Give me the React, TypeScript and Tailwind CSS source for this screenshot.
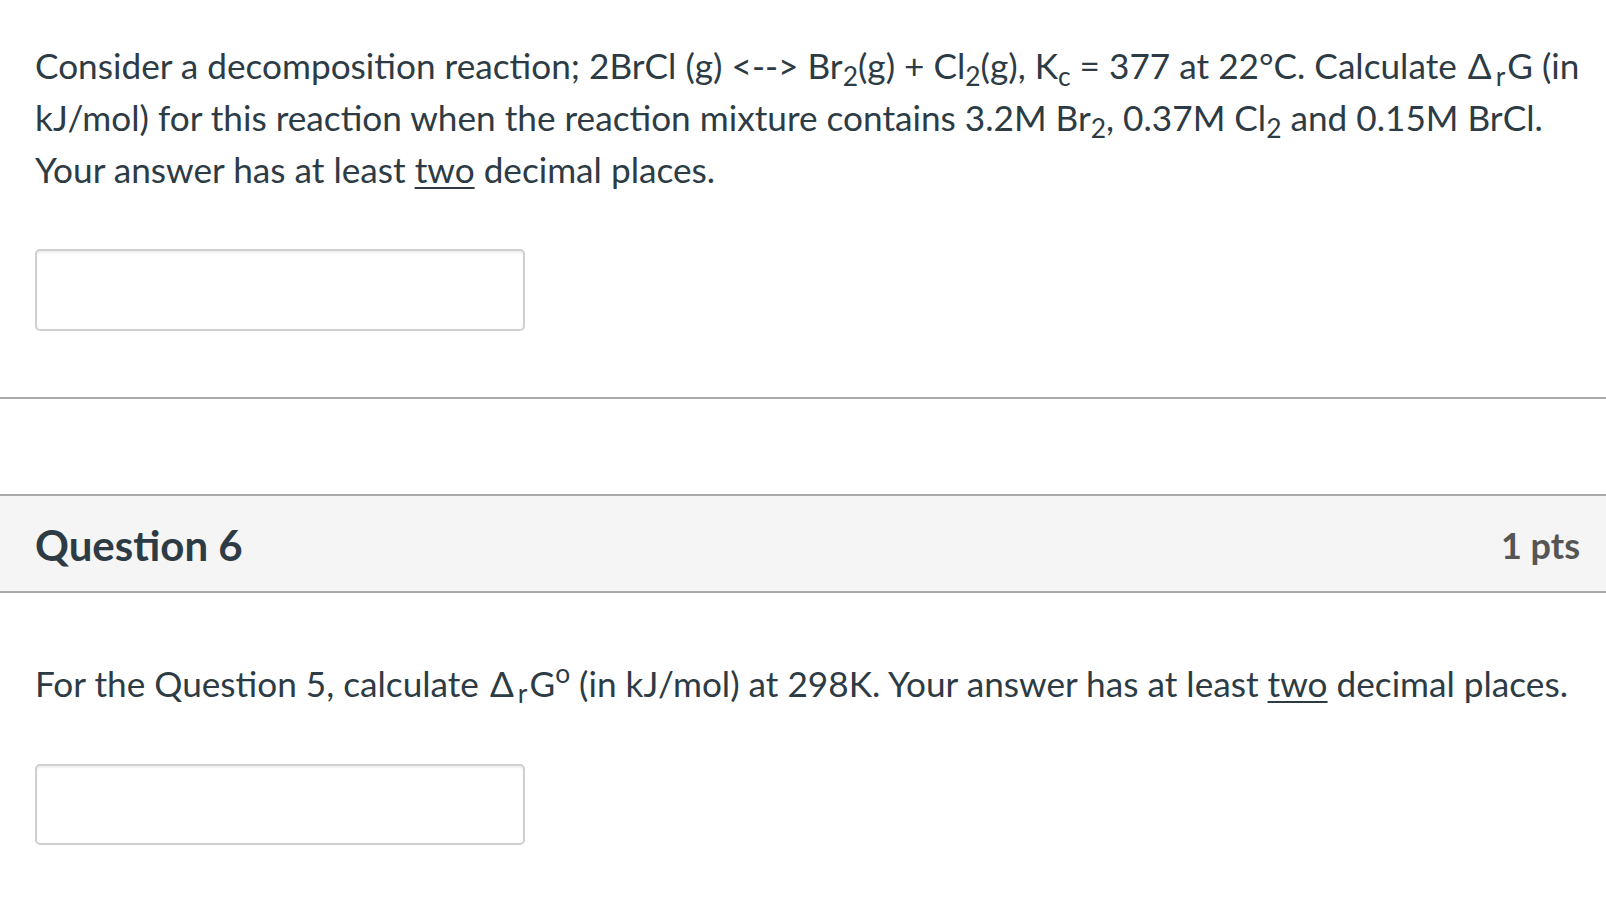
export default function App() {
  return (
    <div className="min-h-screen bg-white font-['Lato','Noto_Sans',sans-serif] text-[#2d3b45]">
      {/* Question 5 body */}
      <div className="pl-[35px] pr-[26px] pt-[39px]">
        <p className="text-[35.2px] leading-[52.2px]">
          Consider a decomposition reaction; 2BrCl (g) &lt;--&gt; Br
          <sub>2</sub>(g) + Cl<sub>2</sub>(g), K<sub>c</sub> = 377 at 22°C.
          Calculate <span className="ml-[2px] mr-[4px]">Δ</span>
          <sub className="mr-[2px]">r</sub>G (in kJ/mol) for this reaction when
          the reaction mixture contains 3.2M Br<sub>2</sub>, 0.37M Cl
          <sub>2</sub> and 0.15M BrCl. Your answer has at least{" "}
          <span className="underline decoration-[2px] underline-offset-[4px]">two</span>{" "}
          decimal places.
        </p>
        <div className="mt-[53px] h-[82px] w-[490px] rounded-[5px] border-2 border-[#cfcfcf] bg-white shadow-[inset_0_2px_2px_rgba(0,0,0,0.06)]" />
      </div>

      <div className="mt-[66px] h-[2px] bg-[#aaaaaa]" />

      {/* Question 6 header */}
      <div className="mt-[95px] flex h-[99px] items-center justify-between border-y-2 border-[#aaaaaa] bg-[#f5f5f5] pl-[35px] pr-[26px] pt-[4px]">
        <h2 className="text-[42px] font-bold leading-none">Question 6</h2>
        <span className="text-[36px] font-bold leading-none text-[#555555]">
          1 pts
        </span>
      </div>

      {/* Question 6 body */}
      <div className="pl-[35px] pr-[26px] pt-[64px]">
        <p className="text-[35.2px] leading-[52.2px]">
          For the Question 5, calculate{" "}
          <span className="ml-[2px] mr-[4px]">Δ</span>
          <sub className="mr-[2px]">r</sub>G<sup>o</sup> (in kJ/mol) at 298K.
          Your answer has at least{" "}
          <span className="underline decoration-[2px] underline-offset-[4px]">two</span>{" "}
          decimal places.
        </p>
        <div className="mt-[55px] h-[81px] w-[490px] rounded-[5px] border-2 border-[#cfcfcf] bg-white shadow-[inset_0_2px_2px_rgba(0,0,0,0.06)]" />
      </div>
    </div>
  );
}
